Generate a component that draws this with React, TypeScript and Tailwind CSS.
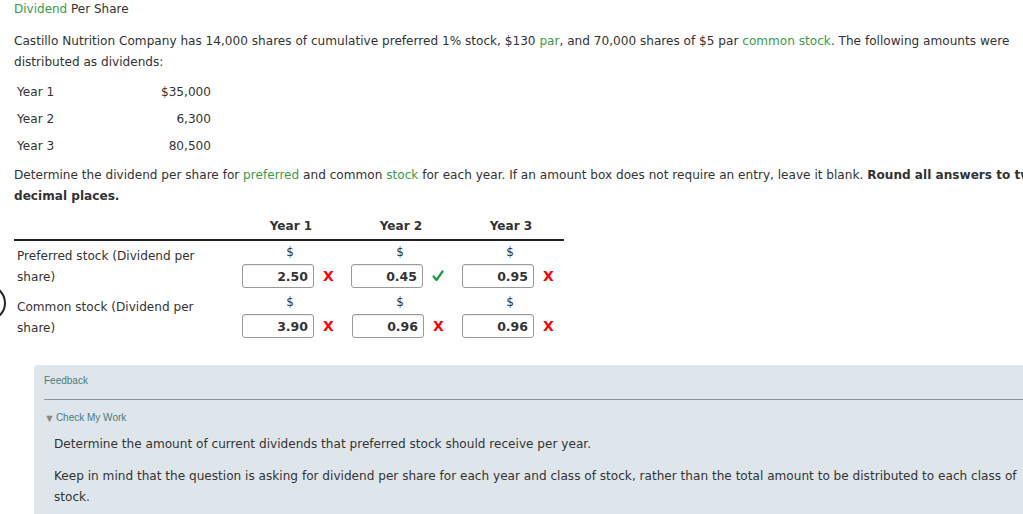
import React from "react";

const Mark = ({ ok }: { ok: boolean }) =>
  ok ? (
    <svg width="12" height="12" viewBox="0 0 12 12" className="shrink-0">
      <path d="M1.5 6.5 L4.5 10 L10.5 1.5" fill="none" stroke="#1a9c3a" strokeWidth="2.2" strokeLinecap="round" strokeLinejoin="round" />
    </svg>
  ) : (
    <span className="w-[10px] text-[14px] font-bold leading-none text-[#ff0000]">X</span>
  );

const Cell = ({ v, ok }: { v: string; ok: boolean }) => (
  <div className="flex w-[110px] flex-col items-center">
    <div className="h-[16px] pl-[2px] text-[12px] leading-[16px]">$</div>
    <div className="mt-[4px] -ml-[3px] flex items-center gap-[9px]">
      <div className="flex h-[24px] w-[72px] items-center justify-end rounded-[3px] border border-[#9a9a9a] bg-white pr-[5px] text-[12.5px] font-bold shadow-[inset_0_1px_1px_rgba(0,0,0,0.08)]">
        {v}
      </div>
      <Mark ok={ok} />
    </div>
  </div>
);

export default function App() {
  const g = "text-[#3b9c4b]";
  return (
    <div className="relative min-h-[514px] overflow-hidden bg-white text-[12.1px] leading-[21px] text-[#333333] [font-family:'DejaVu_Sans',Verdana,sans-serif]">
      <svg className="absolute left-[-30px] top-[283px]" width="40" height="40" viewBox="0 0 40 40">
        <circle cx="18" cy="20" r="17" fill="none" stroke="#222" strokeWidth="2" />
      </svg>
      <div className="pl-[14px]">
        <div className="text-[12px] leading-[18px]">
          <span className={g}>Dividend</span> Per Share
        </div>
        <p className="mt-[13px] w-[1005px]">
          Castillo Nutrition Company has 14,000 shares of cumulative preferred 1% stock, $130{" "}
          <span className={g}>par</span>, and 70,000 shares of $5 par <span className={g}>common stock</span>. The
          following amounts were distributed as dividends:
        </p>
        <table className="mt-[6px] ml-[3px]">
          <tbody>
            {[
              ["Year 1", "$35,000"],
              ["Year 2", "6,300"],
              ["Year 3", "80,500"],
            ].map(([a, b]) => (
              <tr key={a} className="h-[27px]">
                <td className="w-[100px] p-0">{a}</td>
                <td className="w-[94px] p-0 text-right">{b}</td>
              </tr>
            ))}
          </tbody>
        </table>
        <p className="mt-[5px] whitespace-nowrap">
          Determine the dividend per share for <span className={g}>preferred</span> and common{" "}
          <span className={g}>stock</span> for each year. If an amount box does not require an entry, leave it blank.{" "}
          <b>Round all answers to two</b>
          <br />
          <b>decimal places.</b>
        </p>
        <table className="mt-[6px] w-[550px] border-collapse">
          <thead>
            <tr className="border-b-2 border-[#222]">
              <th className="w-[220px] p-0"></th>
              <th className="h-[27px] p-0 pl-[4px] font-bold">Year 1</th>
              <th className="p-0 pl-[4px] font-bold">Year 2</th>
              <th className="p-0 pl-[4px] font-bold">Year 3</th>
            </tr>
          </thead>
          <tbody>
            <tr>
              <td className="p-0 pl-[3px] pt-[5px] align-top leading-[21px]">
                Preferred stock (Dividend per
                <br />
                share)
              </td>
              <td className="p-0 pt-[3px] align-top"><Cell v="2.50" ok={false} /></td>
              <td className="p-0 pt-[3px] align-top"><Cell v="0.45" ok={true} /></td>
              <td className="p-0 pt-[3px] align-top"><Cell v="0.95" ok={false} /></td>
            </tr>
            <tr>
              <td className="p-0 pl-[3px] pt-[9px] align-top leading-[21px]">
                Common stock (Dividend per
                <br />
                share)
              </td>
              <td className="p-0 pt-[6px] align-top"><Cell v="3.90" ok={false} /></td>
              <td className="p-0 pt-[6px] align-top"><Cell v="0.96" ok={false} /></td>
              <td className="p-0 pt-[6px] align-top"><Cell v="0.96" ok={false} /></td>
            </tr>
          </tbody>
        </table>
      </div>
      <div className="ml-[34px] mt-[26px] rounded-tl-[4px] bg-[#dfe6eb] pl-[10px] pt-[9px] pb-[8px]">
        <div className="border-b border-[#8a9499] pb-[11px] text-[10px] leading-[14px] text-[#4a7a7a] [font-family:'Liberation_Sans',Arial,sans-serif]">
          Feedback
        </div>
        <div className="mt-[11px] flex items-center gap-[1px] text-[10px] leading-[14px] text-[#4a7a7a] [font-family:'Liberation_Sans',Arial,sans-serif]">
          <span className="text-[11px] text-[#888]">▼</span>Check My Work
        </div>
        <div className="pl-[10px] leading-[21px]">
          <p className="mt-[9px]">Determine the amount of current dividends that preferred stock should receive per year.</p>
          <p className="mt-[11px] w-[975px]">
            Keep in mind that the question is asking for dividend per share for each year and class of stock, rather than the
            total amount to be distributed to each class of stock.
          </p>
        </div>
      </div>
    </div>
  );
}
